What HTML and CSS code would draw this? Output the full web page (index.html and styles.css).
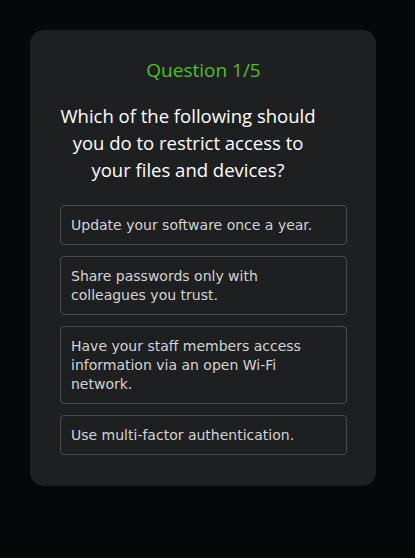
FILE: index.html
```html
<!DOCTYPE html>
<html>
<head>
<meta charset="utf-8">
<link rel="stylesheet" href="styles.css">
</head>
<body>
<div class="card">
  <div class="counter">Question 1/5</div>
  <div class="question">Which of the following should you do to restrict access to your files and devices?</div>
  <div class="options">
    <div class="option">Update your software once a year.</div>
    <div class="option">Share passwords only with colleagues you trust.</div>
    <div class="option">Have your staff members access information via an open Wi-Fi network.</div>
    <div class="option">Use multi-factor authentication.</div>
  </div>
</div>
</body>
</html>
```
FILE: styles.css
```css
html, body {
  margin: 0;
  padding: 0;
  background: #050808;
  height: 100%;
}
body {
  padding: 30px 39px 0 30px;
  box-sizing: border-box;
}
.card {
  background: #1e1f21;
  border-radius: 14px;
  padding: 28px 29px 31px 30px;
  display: flex;
  flex-direction: column;
}
.counter {
  font-family: "Open Sans", sans-serif;
  font-size: 19px;
  line-height: 24px;
  color: #4fbf26;
  text-align: center;
}
.question {
  font-family: "Open Sans", sans-serif;
  font-size: 18.5px;
  line-height: 27px;
  color: #ffffff;
  text-align: center;
  width: 262px;
  margin: 20px 0 0 -3px;
}
.options {
  margin-top: 22px;
  display: flex;
  flex-direction: column;
  gap: 11px;
}
.option {
  font-family: "DejaVu Sans", sans-serif;
  font-size: 14px;
  line-height: 19px;
  color: #d4d4d4;
  border: 1px solid #4a4b4d;
  border-radius: 4px;
  padding: 9.5px 10px;
}
```
